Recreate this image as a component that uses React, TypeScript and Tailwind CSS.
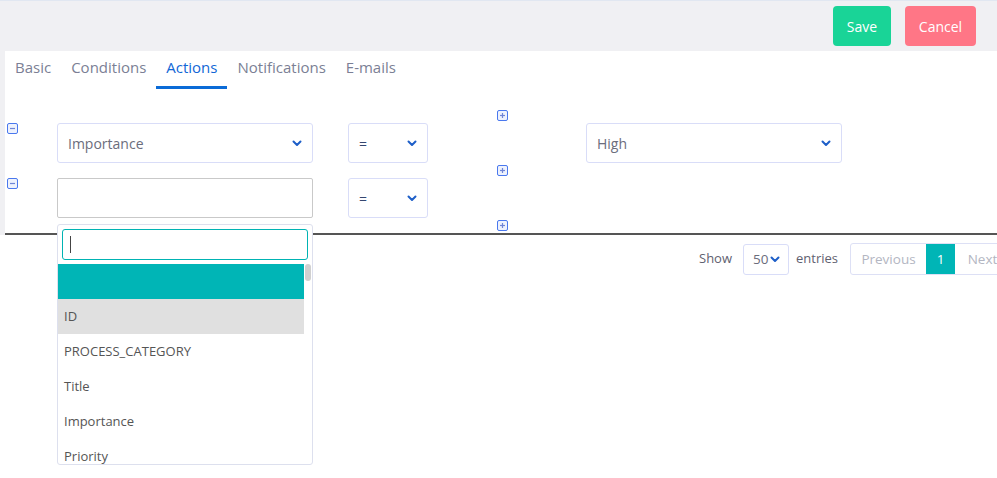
import React from 'react';

const tabs = ['Basic', 'Conditions', 'Actions', 'Notifications', 'E-mails'];
const options = ['', 'ID', 'PROCESS_CATEGORY', 'Title', 'Importance', 'Priority'];

const Chevron = () => (
  <svg width="10" height="7" viewBox="0 0 10 7" className="shrink-0">
    <path d="M1.5 1.5 L5 5 L8.5 1.5" fill="none" stroke="#1e5fc8" strokeWidth="2" strokeLinecap="round" strokeLinejoin="round" />
  </svg>
);

const BoxIcon = ({ plus }: { plus?: boolean }) => (
  <svg width="11" height="11" viewBox="0 0 11 11" className="shrink-0 block">
    <rect x="0.5" y="0.5" width="10" height="10" rx="1.5" fill="#eef2fd" stroke="#4a78ee" />
    <path d="M3 5.5 H8" stroke="#6f86d6" strokeWidth="1.2" />
    {plus && <path d="M5.5 3 V8" stroke="#6f86d6" strokeWidth="1.2" />}
  </svg>
);

const Select = ({ value, width, dark }: { value: string; width: string; dark?: boolean }) => (
  <div
    className={`${width} h-[40px] border border-[#d9ddf8] rounded-[3px] flex items-center justify-between pl-[10px] pr-[10px] text-[14px] bg-white ${
      dark ? 'text-[#34466f]' : 'text-[#6b6d7c]'
    }`}
  >
    <span>{value}</span>
    <Chevron />
  </div>
);

export default function App() {
  return (
    <div className="w-[997px] h-[478px] bg-white overflow-hidden" style={{ fontFamily: '"Open Sans", "Noto Sans", sans-serif' }}>
      <div className="bg-[#f0f0f3] border-t border-[#e1e7f1] pl-[5px]">
        <div className="h-[50px] flex items-start justify-end gap-[14px] pt-[5px] pr-[21px]">
          <button className="h-[40px] w-[58px] rounded-[4px] bg-[#19d497] text-white text-[14px]">Save</button>
          <button className="h-[40px] w-[71px] rounded-[4px] bg-[#ff7686] text-white text-[14px]">Cancel</button>
        </div>
        <div className="bg-white border-b-2 border-[#555555] pb-[3px]">
          <div className="flex">
            {tabs.map((t) => (
              <div
                key={t}
                className={`h-[38px] px-[10px] pb-[2px] flex items-center text-[15px] border-b-[3px] ${
                  t === 'Actions' ? 'border-[#0b6bd7] text-[#1167d6]' : 'border-transparent text-[#7b7f95]'
                }`}
              >
                {t}
              </div>
            ))}
          </div>
          <div className="pt-[21px]">
            <div className="h-[55px] flex items-start">
              <div className="mt-[13px] ml-[2px]"><BoxIcon /></div>
              <div className="mt-[13px] ml-[39px]"><Select value="Importance" width="w-[256px]" /></div>
              <div className="mt-[13px] ml-[35px]"><Select value="=" width="w-[80px]" dark /></div>
              <div className="ml-[69px]"><BoxIcon plus /></div>
              <div className="mt-[13px] ml-[78px]"><Select value="High" width="w-[256px]" /></div>
            </div>
            <div className="h-[55px] flex items-start">
              <div className="mt-[13px] ml-[2px]"><BoxIcon /></div>
              <div className="mt-[13px] ml-[39px] relative">
                <div className="w-[256px] h-[40px] border border-[#c9c9c9] rounded-[2px] bg-white" />
                <div className="absolute left-0 top-[46px] w-[256px] h-[241px] border border-[#dde0ee] rounded-[3px] bg-white z-10 overflow-hidden">
                  <div className="px-[4px] pt-[4px] pb-[4px]">
                    <div className="h-[31px] border border-[#00b3b3] rounded-[3px] flex items-center pl-[7px]">
                      <div className="w-px h-[17px] bg-[#444]" />
                    </div>
                  </div>
                  <div className="flex">
                    <div className="w-[246px]">
                      {options.map((o, i) => (
                        <div
                          key={i}
                          className={`h-[35px] flex items-center pl-[6px] text-[13px] text-[#555] ${
                            i === 0 ? 'bg-[#00b5b6]' : i === 1 ? 'bg-[#e0e0e0]' : ''
                          }`}
                        >
                          {o}
                        </div>
                      ))}
                    </div>
                    <div className="w-[8px] pl-[1px]">
                      <div className="w-[6px] h-[17px] rounded-[3px] bg-[#d0d0d0]" />
                    </div>
                  </div>
                </div>
              </div>
              <div className="mt-[13px] ml-[35px]"><Select value="=" width="w-[80px]" dark /></div>
              <div className="ml-[69px]"><BoxIcon plus /></div>
            </div>
            <div className="h-[10px] flex items-start">
              <div className="ml-[492px]"><BoxIcon plus /></div>
            </div>
          </div>
        </div>
      </div>
      <div className="overflow-hidden">
        <div className="flex justify-end items-center mt-[8px] -mr-[14px] text-[13.5px]">
          <span className="text-[13px] text-[#5f6170]">Show</span>
          <div className="ml-[11px] w-[46px] h-[31px] border border-[#d9ddf8] rounded-[3px] flex items-center pl-[9px] gap-[2px] text-[#6b6d7c]">
            <span>50</span>
            <Chevron />
          </div>
          <span className="ml-[7px] text-[13px] text-[#5f6170]">entries</span>
          <div className="ml-[12px] h-[32px] flex border border-[#dde0f5] rounded-l-[3px]">
            <div className="w-[75px] flex items-center justify-center text-[#b3b6c2]">Previous</div>
            <div className="w-[29px] flex items-center justify-center bg-[#00b5b6] text-white">1</div>
            <div className="w-[55px] flex items-center justify-center text-[#b3b6c2]">Next</div>
          </div>
        </div>
      </div>
    </div>
  );
}
